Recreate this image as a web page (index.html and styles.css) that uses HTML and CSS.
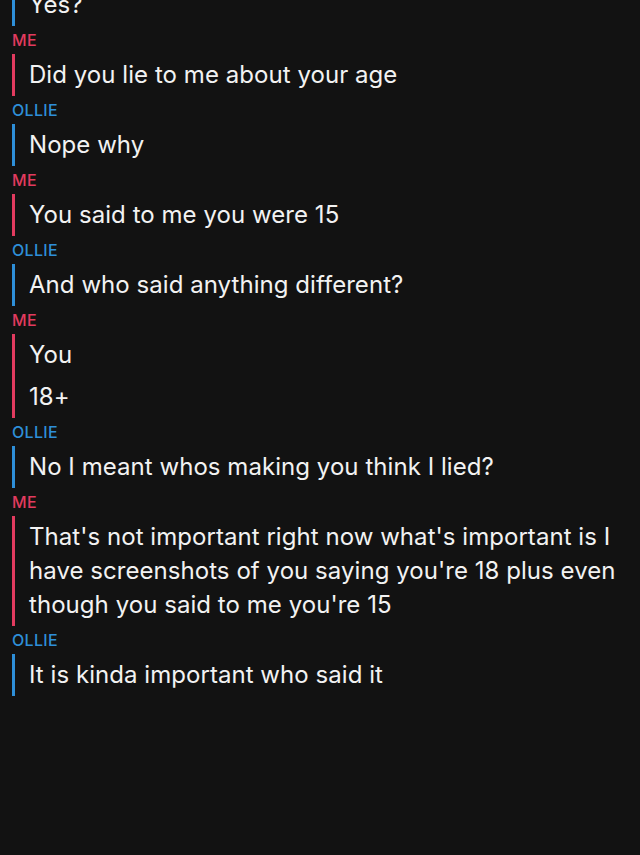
FILE: index.html
```html
<!DOCTYPE html>
<html lang="en">
  <head>
    <meta charset="UTF-8" />
    <meta name="viewport" content="width=device-width, initial-scale=1.0" />
    <title>Chat</title>
    <link rel="stylesheet" href="styles.css">
  </head>
  <body>
    <div class="chat">
      <div class="group them">
        <div class="msg">Yes?</div>
      </div>

      <div class="sender me">ME</div>
      <div class="group me">
        <div class="msg">Did you lie to me about your age</div>
      </div>

      <div class="sender them">OLLIE</div>
      <div class="group them">
        <div class="msg">Nope why</div>
      </div>

      <div class="sender me">ME</div>
      <div class="group me">
        <div class="msg">You said to me you were 15</div>
      </div>

      <div class="sender them">OLLIE</div>
      <div class="group them">
        <div class="msg">And who said anything different?</div>
      </div>

      <div class="sender me">ME</div>
      <div class="group me">
        <div class="msg">You</div>
        <div class="msg">18+</div>
      </div>

      <div class="sender them">OLLIE</div>
      <div class="group them">
        <div class="msg">No I meant whos making you think I lied?</div>
      </div>

      <div class="sender me">ME</div>
      <div class="group me">
        <div class="msg">That's not important right now what's important is I have screenshots of you saying you're 18 plus even though you said to me you're 15</div>
      </div>

      <div class="sender them">OLLIE</div>
      <div class="group them">
        <div class="msg">It is kinda important who said it</div>
      </div>
    </div>
  </body>
</html>
```

FILE: styles.css
```css
html,
body {
  margin: 0;
  padding: 0;
  height: 100%;
  background: #121212;
  overflow: hidden;
}

body {
  font-family: Inter, "Liberation Sans", sans-serif;
  color: #f2f2f2;
}

.chat {
  margin-top: -16px;
  padding-right: 14px;
}

.sender {
  height: 28px;
  line-height: 28px;
  padding-left: 12px;
  font-size: 16px;
  font-weight: 500;
  letter-spacing: 0.3px;
}

.sender.me {
  color: #e23b5f;
}

.sender.them {
  color: #2e8fd8;
}

.group {
  margin-left: 12px;
  padding-left: 14px;
  border-left: 3px solid;
}

.group.me {
  border-color: #e23b5f;
}

.group.them {
  border-color: #2e8fd8;
}

.msg {
  padding: 4px 0;
  font-size: 24px;
  line-height: 34px;
  letter-spacing: 0.05px;
}
```
